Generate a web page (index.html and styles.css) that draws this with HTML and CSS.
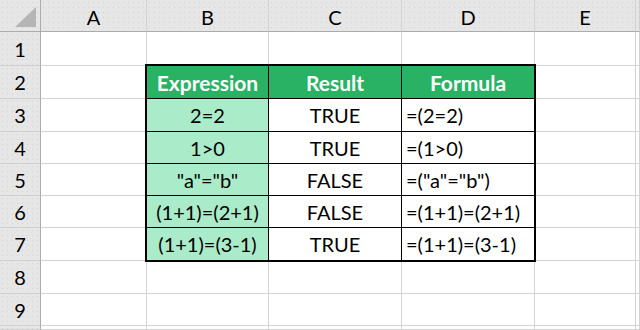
FILE: index.html
```html
<!DOCTYPE html>
<html lang="en">
<head>
    <meta charset="UTF-8">
    <title>Comparison Operators</title>
    <link rel="stylesheet" href="styles.css">
</head>
<body>
    <div class="sheet">
        <!-- column headers -->
        <div class="corner"><span class="corner-mark"></span></div>
        <div class="col-head">A</div>
        <div class="col-head">B</div>
        <div class="col-head">C</div>
        <div class="col-head">D</div>
        <div class="col-head">E</div>
        <div class="col-head"></div>

        <!-- row 1 -->
        <div class="row-head">1</div>
        <div class="cell"></div><div class="cell"></div><div class="cell"></div>
        <div class="cell"></div><div class="cell"></div><div class="cell"></div>

        <!-- rows 2-7: B..D are covered by the table block -->
        <div class="row-head">2</div><div class="cell"></div><div class="cell"></div><div class="cell"></div>
        <div class="row-head">3</div><div class="cell"></div><div class="cell"></div><div class="cell"></div>
        <div class="row-head">4</div><div class="cell"></div><div class="cell"></div><div class="cell"></div>
        <div class="row-head">5</div><div class="cell"></div><div class="cell"></div><div class="cell"></div>
        <div class="row-head">6</div><div class="cell"></div><div class="cell"></div><div class="cell"></div>
        <div class="row-head">7</div><div class="cell"></div><div class="cell"></div><div class="cell"></div>

        <!-- rows 8-10 -->
        <div class="row-head">8</div>
        <div class="cell"></div><div class="cell"></div><div class="cell"></div>
        <div class="cell"></div><div class="cell"></div><div class="cell"></div>
        <div class="row-head">9</div>
        <div class="cell"></div><div class="cell"></div><div class="cell"></div>
        <div class="cell"></div><div class="cell"></div><div class="cell"></div>
        <div class="row-head"></div>
        <div class="cell"></div><div class="cell"></div><div class="cell"></div>
        <div class="cell"></div><div class="cell"></div><div class="cell"></div>

        <!-- B2:D7 -->
        <div class="ops-table">
            <div class="t-head">Expression</div>
            <div class="t-head">Result</div>
            <div class="t-head">Formula</div>

            <div class="t-expr">2=2</div>
            <div class="t-cell">TRUE</div>
            <div class="t-cell t-formula">=(2=2)</div>

            <div class="t-expr">1&gt;0</div>
            <div class="t-cell">TRUE</div>
            <div class="t-cell t-formula">=(1&gt;0)</div>

            <div class="t-expr">"a"="b"</div>
            <div class="t-cell">FALSE</div>
            <div class="t-cell t-formula">=("a"="b")</div>

            <div class="t-expr">(1+1)=(2+1)</div>
            <div class="t-cell">FALSE</div>
            <div class="t-cell t-formula">=(1+1)=(2+1)</div>

            <div class="t-expr">(1+1)=(3-1)</div>
            <div class="t-cell">TRUE</div>
            <div class="t-cell t-formula">=(1+1)=(3-1)</div>
        </div>
    </div>
</body>
</html>
```

FILE: styles.css
```css
html, body {
    margin: 0;
    padding: 0;
    background: #fff;
}
body {
    font-family: Lato, 'Liberation Sans', sans-serif;
    font-size: 20px;
    color: #000;
}
.sheet {
    display: grid;
    grid-template-columns: 41px 106px 122px 133px 133px 101px 1fr;
    grid-template-rows: 32px 34px 33px 33px 32px 32px 32px 33px 33px 32px 1fr;
    width: 640px;
    height: 330px;
    overflow: hidden;
}
.corner,
.col-head,
.row-head {
    box-sizing: border-box;
    background-color: #e6e6e6;
    background-image: radial-gradient(#d2d2d2 0.6px, transparent 0.8px);
    background-size: 5px 5px;
    display: flex;
    align-items: center;
    justify-content: center;
}
.corner {
    border-right: 1px solid #ababab;
    border-bottom: 1px solid #ababab;
    align-items: flex-end;
    justify-content: flex-end;
    padding: 0 4px 4px 0;
}
.corner-mark {
    width: 21px;
    height: 20px;
    background: #b5b5b5;
    clip-path: polygon(100% 0, 100% 100%, 0 100%);
}
.col-head {
    border-right: 1px solid #d2d2d2;
    border-bottom: 1px solid #ababab;
    padding-top: 3px;
}
.row-head {
    border-right: 1px solid #ababab;
    border-bottom: 1px solid #cfcfcf;
}
.cell {
    box-sizing: border-box;
    border-right: 1px solid #d4d4d4;
    border-bottom: 1px solid #d4d4d4;
}

/* the bordered block over B2:D7 */
.ops-table {
    grid-area: 3 / 3 / 9 / 6;
    margin: -2px -1px -1px -2px;
    border: 2px solid #000;
    background: #fff;
    display: grid;
    grid-template-columns: 122px 133px 1fr;
    grid-template-rows: 33px 33px 32px 32px 32px 1fr;
}
.ops-table > div {
    box-sizing: border-box;
    border-right: 1px solid #000;
    border-bottom: 1px solid #000;
    display: flex;
    align-items: center;
    justify-content: center;
    white-space: nowrap;
}
.ops-table > div:nth-child(3n) {
    border-right: none;
}
.ops-table > div:nth-last-child(-n+3) {
    border-bottom: none;
}
.t-head {
    background: #29b263;
    color: #fff;
    font-weight: bold;
    font-size: 21px;
}
.t-expr {
    background: #aaebc9;
}
.t-formula {
    justify-content: flex-start !important;
    padding-left: 4px;
}
```
